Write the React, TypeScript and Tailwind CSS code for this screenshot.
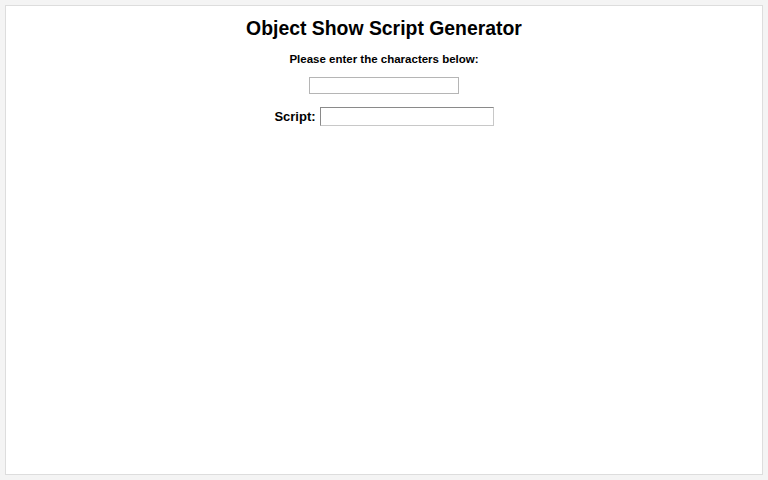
export default function App() {
    return (
        <div className="h-[480px] bg-[#f4f4f4] p-[5px] font-['Liberation_Sans',Arial,sans-serif] text-black">
            <div className="h-full bg-white border border-[#dddddd] flex flex-col items-center">
                <h1 className="text-[19.4px] font-bold mt-[10px] leading-[24px]">Object Show Script Generator</h1>
                <p className="text-[11.5px] font-bold mt-[12px] leading-[14px]">Please enter the characters below:</p>
                <input type="text" className="mt-[11px] w-[150px] h-[17px] border border-[#b5b5b5] bg-white" />
                <div className="mt-[13px] flex items-center gap-[4px]">
                    <label className="text-[13px] font-bold">Script:</label>
                    <input type="text" className="w-[174px] h-[19px] border border-t-[#8a8a8a] border-l-[#8a8a8a] border-b-[#c8c8c8] border-r-[#c8c8c8] bg-white" />
                </div>
            </div>
        </div>
    )
}
